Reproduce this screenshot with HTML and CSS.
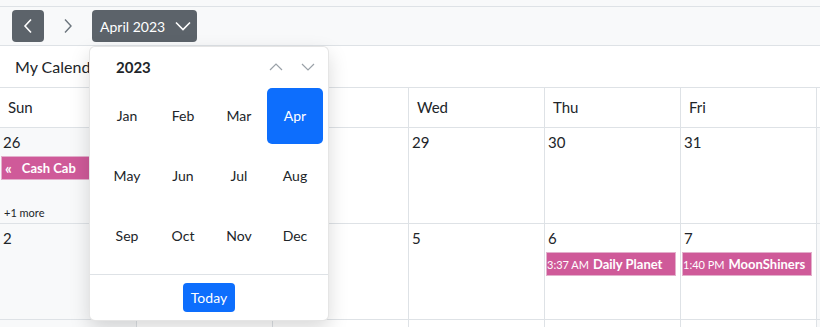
FILE: index.html
```html
<!DOCTYPE html>
<html lang="en">
<head>
    <meta charset="UTF-8">
    <meta name="viewport" content="width=device-width, initial-scale=1.0">
    <title>My Calendar</title>
    <link rel="stylesheet" href="styles.css">
</head>
<body>
    <div class="top-strip"></div>

    <!-- Verktygsfält med navigering -->
    <div class="toolbar">
        <button class="btn-dark btn-icon" aria-label="Previous">
            <svg width="10" height="16" viewBox="0 0 10 16"><path d="M8 1.5 L2 8 L8 14.5" fill="none" stroke="#fff" stroke-width="1.6"/></svg>
        </button>
        <button class="btn-plain btn-icon" aria-label="Next">
            <svg width="10" height="16" viewBox="0 0 10 16"><path d="M2 1.5 L8 8 L2 14.5" fill="none" stroke="#6c757d" stroke-width="1.4"/></svg>
        </button>
        <button class="btn-dark btn-month">
            <span>April 2023</span>
            <svg width="16" height="10" viewBox="0 0 16 10"><path d="M1 1.5 L8 8.5 L15 1.5" fill="none" stroke="#fff" stroke-width="1.6"/></svg>
        </button>
    </div>

    <div class="cal-title">My Calendar</div>

    <div class="calendar">
        <div class="cell head weekend">Sun</div>
        <div class="cell head">Mon</div>
        <div class="cell head">Tue</div>
        <div class="cell head">Wed</div>
        <div class="cell head">Thu</div>
        <div class="cell head">Fri</div>
        <div class="cell head weekend">Sat</div>

        <div class="cell day weekend">
            <div class="num">26</div>
            <div class="event"><span class="cont">&laquo;</span><span class="ev-title">Cash Cab</span></div>
            <div class="more">+1 more</div>
        </div>
        <div class="cell day"><div class="num">27</div></div>
        <div class="cell day"><div class="num">28</div></div>
        <div class="cell day"><div class="num">29</div></div>
        <div class="cell day"><div class="num">30</div></div>
        <div class="cell day"><div class="num">31</div></div>
        <div class="cell day weekend"><div class="num">1</div></div>

        <div class="cell day weekend"><div class="num">2</div></div>
        <div class="cell day"><div class="num">3</div></div>
        <div class="cell day"><div class="num">4</div></div>
        <div class="cell day"><div class="num">5</div></div>
        <div class="cell day">
            <div class="num">6</div>
            <div class="event"><span class="ev-time">3:37 AM</span><span class="ev-title">Daily Planet</span></div>
        </div>
        <div class="cell day">
            <div class="num">7</div>
            <div class="event"><span class="ev-time">1:40 PM</span><span class="ev-title">MoonShiners</span></div>
        </div>
        <div class="cell day weekend"><div class="num">8</div></div>

        <div class="cell day weekend"><div class="num">9</div></div>
        <div class="cell day"><div class="num">10</div></div>
        <div class="cell day"><div class="num">11</div></div>
        <div class="cell day"><div class="num">12</div></div>
        <div class="cell day"><div class="num">13</div></div>
        <div class="cell day"><div class="num">14</div></div>
        <div class="cell day weekend"><div class="num">15</div></div>
    </div>

    <!-- Månadsväljare (öppen) -->
    <div class="month-picker">
        <div class="mp-head">
            <span class="mp-year">2023</span>
            <span class="mp-arrows">
                <svg width="14" height="8" viewBox="0 0 14 8"><path d="M1 7 L7 1 L13 7" fill="none" stroke="#9aa1a8" stroke-width="1.2"/></svg>
                <svg width="14" height="8" viewBox="0 0 14 8"><path d="M1 1 L7 7 L13 1" fill="none" stroke="#9aa1a8" stroke-width="1.2"/></svg>
            </span>
        </div>
        <div class="mp-grid">
            <div class="mp-month">Jan</div>
            <div class="mp-month">Feb</div>
            <div class="mp-month">Mar</div>
            <div class="mp-month active">Apr</div>
            <div class="mp-month">May</div>
            <div class="mp-month">Jun</div>
            <div class="mp-month">Jul</div>
            <div class="mp-month">Aug</div>
            <div class="mp-month">Sep</div>
            <div class="mp-month">Oct</div>
            <div class="mp-month">Nov</div>
            <div class="mp-month">Dec</div>
        </div>
        <div class="mp-foot">
            <button class="btn-today">Today</button>
        </div>
    </div>
</body>
</html>
```

FILE: styles.css
```css
body {
    font-family: Lato, "Noto Sans", sans-serif;
    font-size: 14px;
    color: #212529;
    background-color: #fff;
    margin: 0;
    overflow: hidden;
    position: relative;
    height: 327px;
}

button {
    font-family: inherit;
    cursor: pointer;
}

.top-strip {
    height: 6px;
    background-color: #f8f9fa;
    border-bottom: 1px solid #dee2e6;
}

.toolbar {
    height: 38px;
    background-color: #f8f9fa;
    border-bottom: 1px solid #dee2e6;
    display: flex;
    align-items: center;
    padding-left: 12px;
}

.btn-icon {
    width: 32px;
    height: 32px;
    display: flex;
    align-items: center;
    justify-content: center;
    padding: 0;
}

.btn-dark {
    background-color: #5c636a;
    color: #fff;
    border: none;
    border-radius: 4px;
}

.btn-plain {
    background: none;
    border: none;
    margin: 0 8px;
}

.btn-month {
    height: 32px;
    width: 105px;
    padding: 0 0 0 8px;
    font-size: 14px;
    display: flex;
    align-items: center;
    gap: 10px;
    white-space: nowrap;
}

.cal-title {
    height: 41px;
    font-size: 16px;
    line-height: 41px;
    padding-left: 15px;
}

.calendar {
    display: grid;
    grid-template-columns: 137px repeat(6, 136px);
    width: 953px;
    border-top: 1px solid #dee2e6;
}

.cell {
    border-right: 1px solid #dee2e6;
    border-bottom: 1px solid #dee2e6;
}

.cell.weekend {
    background-color: #f8f9fa;
}

.head {
    height: 39px;
    line-height: 39px;
    padding-left: 8px;
    font-size: 15px;
    background-color: #fff !important;
}

.day {
    height: 95px;
    display: flex;
    flex-direction: column;
}

.num {
    padding: 5px 4px 0 3px;
    height: 23px;
    line-height: 18px;
    font-size: 15px;
    box-sizing: border-box;
}

.event {
    margin: 5px 4px 0 1px;
    height: 24px;
    background-color: #cf5a99;
    border: 1px solid #e3b0cc;
    box-sizing: border-box;
    color: #fff;
    display: flex;
    align-items: center;
    white-space: nowrap;
    overflow: hidden;
}

.cont {
    font-weight: bold;
    font-size: 15px;
    padding: 0 10px 0 3px;
}

.ev-time {
    font-size: 11px;
    margin-right: 4px;
}

.ev-title {
    font-size: 13px;
    font-weight: bold;
}

.more {
    margin-top: auto;
    margin-bottom: 4px;
    padding-left: 4px;
    font-size: 11px;
}

.month-picker {
    position: absolute;
    left: 89px;
    top: 46px;
    width: 240px;
    height: 275px;
    box-sizing: border-box;
    background-color: #fff;
    border: 1px solid rgba(0, 0, 0, 0.1);
    border-radius: 6px;
    box-shadow: 0 8px 20px rgba(0, 0, 0, 0.15);
    display: flex;
    flex-direction: column;
}

.mp-head {
    height: 41px;
    box-sizing: border-box;
    display: flex;
    align-items: center;
    justify-content: space-between;
    padding: 0 13px 2px 26px;
}

.mp-year {
    font-weight: bold;
    font-size: 15px;
}

.mp-arrows {
    display: flex;
    gap: 18px;
    align-items: center;
}

.mp-grid {
    display: grid;
    grid-template-columns: repeat(4, 56px);
    grid-auto-rows: 56px;
    row-gap: 4px;
    padding: 0 0 10px 9px;
}

.mp-month {
    display: flex;
    align-items: center;
    justify-content: center;
    border-radius: 5px;
    padding-bottom: 1px;
}

.mp-month.active {
    background-color: #0d6efd;
    color: #fff;
}

.mp-foot {
    border-top: 1px solid #dee2e6;
    display: flex;
    justify-content: center;
    padding-top: 8px;
}

.btn-today {
    background-color: #0d6efd;
    color: #fff;
    border: none;
    border-radius: 4px;
    height: 29px;
    padding: 0 8px;
    font-size: 14px;
}
```
